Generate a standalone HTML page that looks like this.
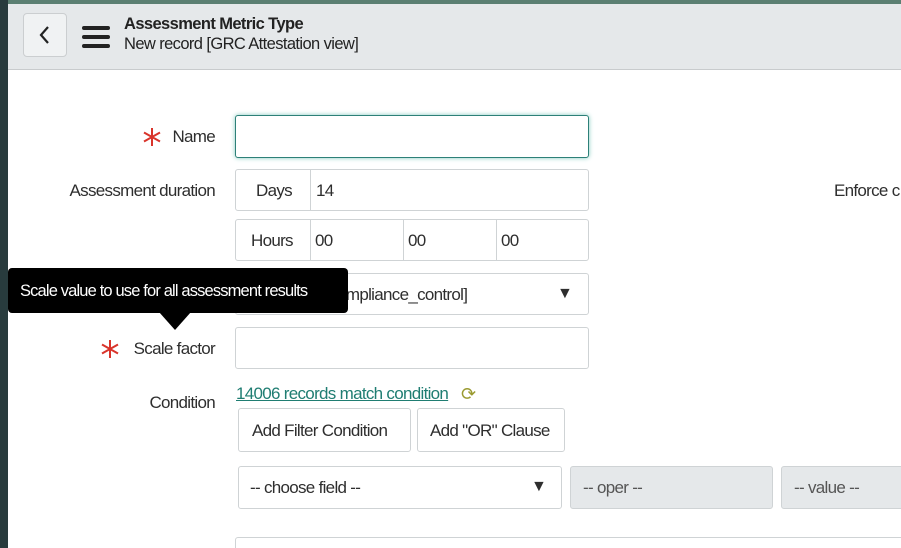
<!DOCTYPE html>
<html style="overflow:hidden;width:901px;height:548px"><head><style>
*{box-sizing:border-box;margin:0;padding:0}
body{width:901px;height:548px;overflow:hidden;background:#fff;font-family:"Liberation Sans",sans-serif;color:#2e2e2e;position:relative;font-size:17px;letter-spacing:-0.7px}
.a{position:absolute}
.box{position:absolute;border:1px solid #cfd3d5;border-radius:3px;background:#fff}
.lbl{position:absolute;text-align:right;right:686px;font-size:17px}
.t{position:absolute;font-size:17px}
</style></head><body>
<div class="a" style="left:0;top:0;width:901px;height:4px;background:#5b7f72"></div>
<div class="a" style="left:0;top:0;width:8px;height:548px;background:#283b3d"></div>
<div class="a" style="left:8px;top:4px;width:893px;height:66px;background:#e5e8ea;border-bottom:1px solid #c8cbcd"></div>
<div class="a" style="left:23px;top:13px;width:44px;height:44px;border:1px solid #cbced0;border-radius:4px;background:#f0f2f3"></div>
<svg class="a" style="left:38px;top:25px" width="14" height="20"><path d="M10 2 L3 10 L10 18" stroke="#222" stroke-width="2.2" fill="none"/></svg>
<div class="a" style="left:82px;top:26px;width:28px;height:4px;background:#222;border-radius:2px"></div>
<div class="a" style="left:82px;top:35px;width:28px;height:4px;background:#222;border-radius:2px"></div>
<div class="a" style="left:82px;top:44px;width:28px;height:4px;background:#222;border-radius:2px"></div>
<div class="t" style="left:124px;top:15px;font-weight:bold;font-size:16.5px;color:#222;letter-spacing:-0.6px">Assessment Metric Type</div>
<div class="t" style="left:124px;top:35px;font-size:16.5px;color:#222;letter-spacing:-0.6px">New record [GRC Attestation view]</div>

<svg class="a" style="left:142px;top:127px" width="20" height="20"><g stroke="#d9342b" stroke-width="2"><path d="M10 1V19M2 5.5L18 14.5M2 14.5L18 5.5"/></g></svg>
<div class="lbl" style="top:127px">Name</div>
<div class="box" style="left:235px;top:115px;width:354px;height:43px;border-color:#2d8078;box-shadow:0 0 5px #7fc8bd"></div>

<div class="lbl" style="top:181px">Assessment duration</div>
<div class="box" style="left:235px;top:169px;width:354px;height:42px"></div>
<div class="a" style="left:310px;top:170px;width:1px;height:40px;background:#cfd3d5"></div>
<div class="t" style="left:256px;top:181px">Days</div>
<div class="t" style="left:316px;top:181px">14</div>
<div class="t" style="left:834px;top:181px">Enforce c</div>

<div class="box" style="left:235px;top:219px;width:354px;height:42px"></div>
<div class="a" style="left:310px;top:220px;width:1px;height:40px;background:#cfd3d5"></div>
<div class="a" style="left:403px;top:220px;width:1px;height:40px;background:#cfd3d5"></div>
<div class="a" style="left:496px;top:220px;width:1px;height:40px;background:#cfd3d5"></div>
<div class="t" style="left:251px;top:231px">Hours</div>
<div class="t" style="left:315px;top:231px">00</div>
<div class="t" style="left:408px;top:231px">00</div>
<div class="t" style="left:501px;top:231px">00</div>

<div class="box" style="left:235px;top:273px;width:354px;height:42px"></div>
<div class="t" style="left:300px;top:285px">[sn_compliance_control]</div>
<div class="t" style="left:557px;top:285px;font-size:16px">▼</div>

<div class="a" style="left:8px;top:268px;width:340px;height:45px;background:#000;border-radius:4px"></div>
<div class="a" style="left:159px;top:312px;width:0;height:0;border-left:16px solid transparent;border-right:16px solid transparent;border-top:18px solid #000"></div>
<div class="t" style="left:20px;top:282px;color:#fff;font-size:16.5px;letter-spacing:-0.85px">Scale value to use for all assessment results</div>

<svg class="a" style="left:100px;top:339px" width="20" height="20"><g stroke="#d9342b" stroke-width="2"><path d="M10 1V19M2 5.5L18 14.5M2 14.5L18 5.5"/></g></svg>
<div class="lbl" style="top:339px">Scale factor</div>
<div class="box" style="left:235px;top:327px;width:354px;height:42px"></div>

<div class="lbl" style="top:393px">Condition</div>
<div class="t" style="left:236px;top:384px;color:#1f7d72;text-decoration:underline">14006 records match condition</div>
<div class="t" style="left:461px;top:384px;color:#9a9a30;font-size:18px">⟳</div>
<div class="box" style="left:238px;top:408px;width:173px;height:44px"></div>
<div class="t" style="left:252px;top:421px">Add Filter Condition</div>
<div class="box" style="left:417px;top:408px;width:148px;height:44px"></div>
<div class="t" style="left:430px;top:421px">Add "OR" Clause</div>

<div class="box" style="left:238px;top:466px;width:324px;height:43px"></div>
<div class="t" style="left:250px;top:478px">-- choose field --</div>
<div class="t" style="left:531px;top:478px;font-size:16px">▼</div>
<div class="box" style="left:570px;top:466px;width:203px;height:43px;background:#e5e8ea"></div>
<div class="t" style="left:583px;top:478px;color:#555">-- oper --</div>
<div class="box" style="left:781px;top:466px;width:130px;height:43px;background:#e5e8ea"></div>
<div class="t" style="left:794px;top:478px;color:#555">-- value --</div>
<div class="box" style="left:235px;top:537px;width:680px;height:11px;border-bottom:none;border-radius:3px 3px 0 0"></div>
</body></html>
